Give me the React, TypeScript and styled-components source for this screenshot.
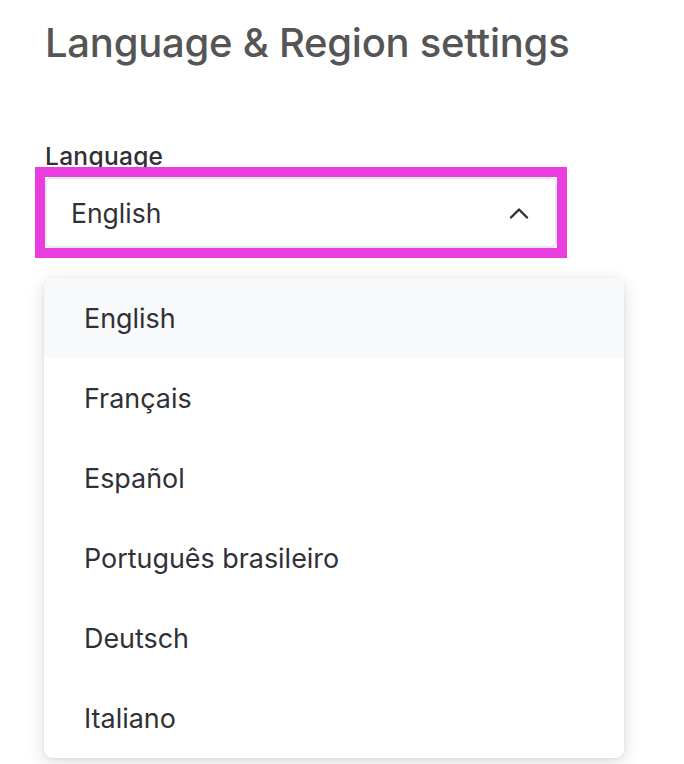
import React, { useState } from "react";
import styled, { createGlobalStyle } from "styled-components";

const GlobalStyle = createGlobalStyle`
  html, body {
    margin: 0;
    padding: 0;
    background: #ffffff;
  }
  body {
    font-family: Inter, "Liberation Sans", sans-serif;
  }
`;

const Page = styled.div`
  padding: 0 0 0 45px;
  width: 684px;
  height: 764px;
  box-sizing: border-box;
  overflow: hidden;
`;

const Title = styled.h1`
  margin: 0;
  padding-top: 19px;
  font-size: 40px;
  line-height: 48px;
  font-weight: 500;
  color: #555555;
  letter-spacing: -0.25px;
`;

const Field = styled.div`
  margin-top: 78px;
  display: flex;
  flex-direction: column;
`;

const Label = styled.label`
  font-size: 24.5px;
  line-height: 22px;
  font-weight: 500;
  letter-spacing: 0.3px;
  color: #2f3035;
`;

// focus ring drawn over the bottom of the label, square corners
const FocusRing = styled.div`
  position: relative;
  width: 512px;
  margin: 0 0 0 -10px;
  border: 10px solid #e93de0;
`;

const SelectBox = styled.button`
  display: flex;
  align-items: center;
  justify-content: space-between;
  width: 100%;
  height: 71px;
  padding: 0 26px 0 24px;
  box-sizing: border-box;
  background: #ffffff;
  border: 2px solid #e6e8ec;
  border-radius: 6px;
  outline: none;
  font-family: Inter, "Liberation Sans", sans-serif;
  font-size: 26.5px;
  color: #303136;
  cursor: pointer;
`;

const Menu = styled.ul`
  position: absolute;
  top: calc(100% + 30px);
  left: -1px;
  width: 580px;
  margin: 0;
  padding: 0;
  list-style: none;
  background: #ffffff;
  border-radius: 9px;
  overflow: hidden;
  box-shadow: 0 4px 18px rgba(0, 0, 0, 0.14), 0 1px 4px rgba(0, 0, 0, 0.06);
`;

const Option = styled.li<{ $active?: boolean }>`
  height: 80px;
  display: flex;
  align-items: center;
  padding-left: 40px;
  font-family: Inter, "Liberation Sans", sans-serif;
  font-size: 26.9px;
  color: #303136;
  background: ${(p) => (p.$active ? "#f8f9fb" : "#ffffff")};
`;

const languages = [
  "English",
  "Français",
  "Español",
  "Português brasileiro",
  "Deutsch",
  "Italiano",
];

function ChevronUp() {
  return (
    <svg width="20" height="12" viewBox="0 0 20 12" fill="none">
      <path
        d="M2 10.5 L10 2.5 L18 10.5"
        stroke="#2f3035"
        strokeWidth="2.4"
        strokeLinecap="round"
        strokeLinejoin="round"
      />
    </svg>
  );
}

export default function App() {
  const [value] = useState("English");
  return (
    <Page>
      <GlobalStyle />
      <Title>Language &amp; Region settings</Title>
      <Field>
        <Label>Language</Label>
        <FocusRing>
          <SelectBox type="button">
            <span>{value}</span>
            <ChevronUp />
          </SelectBox>
          <Menu>
            {languages.map((l) => (
              <Option key={l} $active={l === value}>
                {l}
              </Option>
            ))}
          </Menu>
        </FocusRing>
      </Field>
    </Page>
  );
}
